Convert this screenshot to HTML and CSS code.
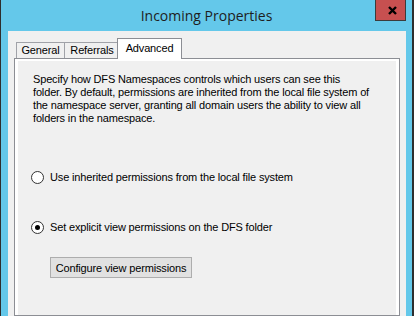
FILE: index.html
```html
<!DOCTYPE html>
<html lang="en">

<head>
    <meta charset="UTF-8" />
    <meta name="viewport" content="width=device-width, initial-scale=1.0" />
    <title>Incoming Properties</title>
    <link rel="stylesheet" href="styles.css">
</head>

<body>
    <div class="window">
        <div class="titlebar">
            <span></span>
            <div class="title">Incoming Properties</div>
            <div class="controls">
                <button class="close-btn" aria-label="Close">
                    <svg width="9" height="9" viewBox="0 0 9 9">
                        <path d="M1 1 L8 8 M8 1 L1 8" stroke="#000" stroke-width="2.4" fill="none" />
                    </svg>
                </button>
            </div>
        </div>

        <div class="client">
            <div class="tabs">
                <div class="tab tab-general">General</div>
                <div class="tab tab-referrals">Referrals</div>
                <div class="tab tab-advanced active">Advanced</div>
            </div>

            <div class="panel">
                <div class="page">
                    <p class="desc">Specify how DFS Namespaces controls which users can see this<br>folder. By default, permissions are inherited from the local file system of the namespace server, granting all domain users the ability to view all folders in the namespace.</p>

                    <label class="option first">
                        <span class="radio"></span>
                        Use inherited permissions from the local file system
                    </label>

                    <label class="option second">
                        <span class="radio checked"></span>
                        Set explicit view permissions on the DFS folder
                    </label>

                    <button class="push-btn">Configure view permissions</button>
                </div>
            </div>
        </div>
    </div>
</body>

</html>
```

FILE: styles.css
```css
body {
    margin: 0;
    font-family: 'Liberation Sans', Arial, sans-serif;
    font-size: 11px;
    letter-spacing: -0.15px;
    color: #000;
    background: #64c8ea;
}

.window {
    width: 414px;
    height: 316px;
    box-sizing: border-box;
    background: #64c8ea;
    border-left: 1px solid #2e2e2e;
    border-right: 2px solid #2e2e2e;
    display: flex;
    flex-direction: column;
    overflow: hidden;
}

.titlebar {
    height: 31px;
    flex-shrink: 0;
    display: grid;
    grid-template-columns: 1fr auto 1fr;
    align-items: start;
}

.title {
    font-family: 'Segoe UI', 'Open Sans', sans-serif;
    font-size: 14px;
    letter-spacing: 0;
    line-height: 31px;
    color: #1e1e1e;
    white-space: nowrap;
}

.controls {
    justify-self: end;
    display: flex;
}

.close-btn {
    width: 31px;
    height: 21px;
    margin: 0 6px 0 0;
    padding: 0 0 0 4px;
    box-sizing: border-box;
    background: #c75050;
    border: 1px solid #3c3c3c;
    border-top: none;
    display: flex;
    align-items: center;
    justify-content: center;
}

.client {
    flex: 1;
    margin: 0 6px 0 7px;
    padding: 7px 6px 0 6px;
    background: #f0f0f0;
    display: flex;
    flex-direction: column;
}

.tabs {
    display: flex;
    align-items: flex-end;
    height: 20px;
    padding-left: 2px;
}

.tab {
    height: 16px;
    box-sizing: border-box;
    line-height: 14px;
    text-align: center;
    border: 1px solid #a0a2a8;
    border-bottom: none;
    background: #f0f0f0;
    white-space: nowrap;
}

.tab + .tab {
    margin-left: -1px;
}

.tab-general {
    width: 49px;
}

.tab-referrals {
    width: 54px;
    padding-left: 2px;
}

.tab-advanced {
    width: 65px;
}

.tab.active {
    position: relative;
    z-index: 1;
    height: 21px;
    margin-bottom: -1px;
    padding-top: 2px;
    background: #fff;
    border-color: #8c8e94;
}

.panel {
    flex: 1;
    border: 1px solid #8c8e94;
    background: #fff;
    padding: 2px 3px 0 3px;
    display: flex;
    flex-direction: column;
}

.page {
    flex: 1;
    background: #f0f0f0;
    padding: 12px 15px 0;
    display: flex;
    flex-direction: column;
    align-items: flex-start;
}

.desc {
    margin: 0;
    max-width: 345px;
    line-height: 13px;
}

.option {
    display: flex;
    align-items: center;
    gap: 6px;
    margin-left: -2px;
    line-height: 13px;
}

.option.first {
    margin-top: 46px;
}

.option.second {
    margin-top: 37px;
}

.radio {
    width: 13px;
    height: 13px;
    box-sizing: border-box;
    border: 1px solid #333;
    border-radius: 50%;
    background: #fff;
    display: flex;
    align-items: center;
    justify-content: center;
}

.radio.checked::after {
    content: '';
    width: 5px;
    height: 5px;
    border-radius: 50%;
    background: #000;
}

.push-btn {
    margin: 23px 0 0 17px;
    width: 142px;
    height: 21px;
    padding: 0;
    font-family: 'Liberation Sans', Arial, sans-serif;
    font-size: 11px;
    letter-spacing: -0.15px;
    color: #000;
    background: #e1e1e1;
    border: 1px solid #adadad;
}
```
